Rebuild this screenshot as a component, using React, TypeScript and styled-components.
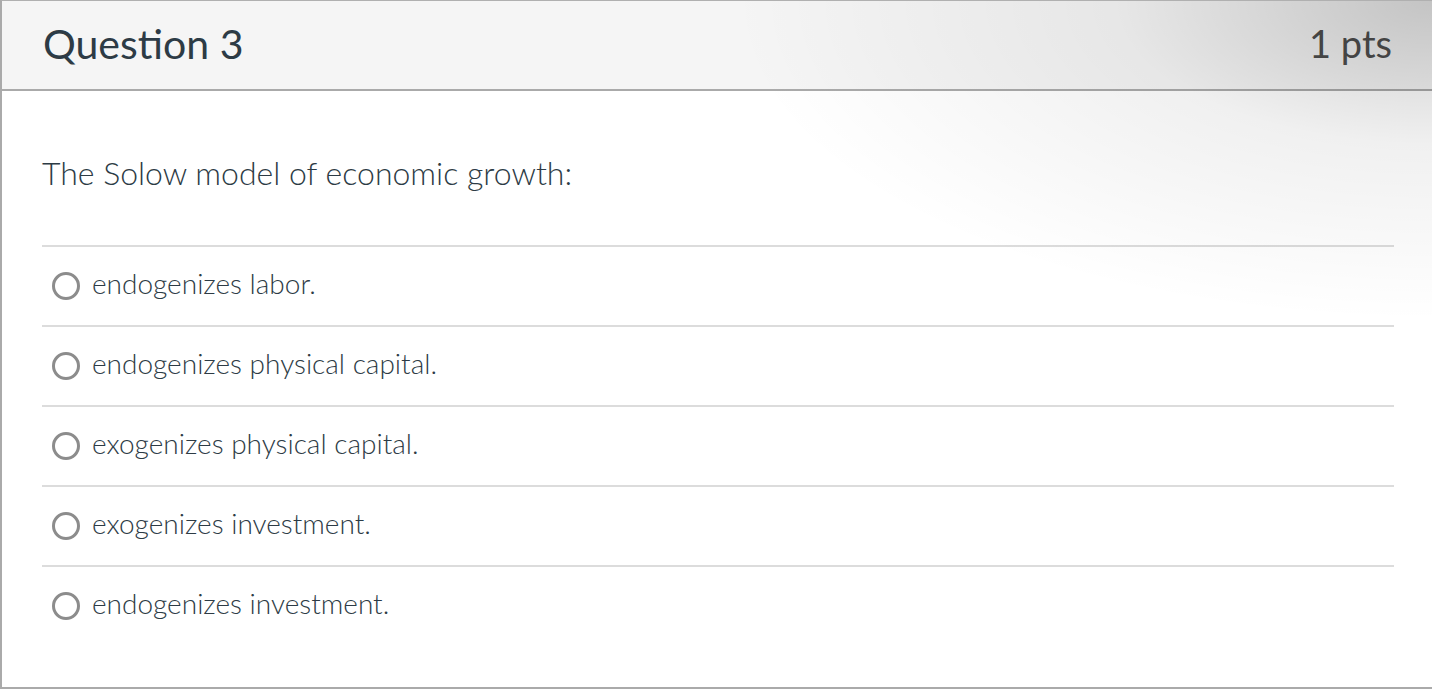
import styled, { createGlobalStyle } from "styled-components";

const GlobalStyle = createGlobalStyle`
  body {
    margin: 0;
    background: #fff;
    font-family: Lato, "Open Sans", sans-serif;
  }
`;

const answers = [
  "endogenizes labor.",
  "endogenizes physical capital.",
  "exogenizes physical capital.",
  "exogenizes investment.",
  "endogenizes investment.",
];

const App = () => {
  return (
    <>
      <GlobalStyle />
      <QuestionBox>
        <Header>
          <Title>Question 3</Title>
          <Points>1 pts</Points>
        </Header>
        <Content>
          <QuestionText>The Solow model of economic growth:</QuestionText>
          <AnswerList>
            {answers.map((a) => (
              <Answer key={a}>
                <Radio />
                <AnswerLabel>{a}</AnswerLabel>
              </Answer>
            ))}
          </AnswerList>
        </Content>
        <Shade />
      </QuestionBox>
    </>
  );
};

export default App;

const QuestionBox = styled.div`
  position: relative;
  width: 1432px;
  height: 689px;
  box-sizing: border-box;
  border-top: 1px solid #b0b0b0;
  border-left: 2px solid #aaaaaa;
  border-bottom: 2px solid #aaaaaa;
  overflow: hidden;
`;

const Header = styled.div`
  display: flex;
  justify-content: space-between;
  align-items: center;
  height: 88px;
  padding: 0 40px 0 41px;
  background: #f5f5f5;
  border-bottom: 2px solid #aaaaaa;
`;

const Title = styled.h2`
  margin: 0;
  font-size: 41px;
  font-weight: 400;
  color: #2d3b45;
  padding-bottom: 4px;
`;

const Points = styled.div`
  font-size: 38px;
  color: #4f4f4f;
  padding-bottom: 4px;
`;

const Content = styled.div`
  padding: 0 38px 0 40px;
`;

const QuestionText = styled.p`
  margin: 0;
  padding-top: 65px;
  height: 89px;
  font-size: 32px;
  font-weight: 300;
  color: #2d3b45;
  line-height: 34px;
`;

const AnswerList = styled.div`
  display: flex;
  flex-direction: column;
`;

const Answer = styled.div`
  display: flex;
  align-items: center;
  gap: 12px;
  height: 78px;
  border-top: 2px solid #dcdcdc;
  padding-left: 10px;
`;

const Radio = styled.span`
  width: 22px;
  height: 22px;
  border: 3px solid #8c8c8c;
  border-radius: 50%;
  background: #fff;
  flex-shrink: 0;
`;

const AnswerLabel = styled.span`
  font-size: 28px;
  font-weight: 300;
  color: #2d3b45;
  padding-bottom: 6px;
`;

const Shade = styled.div`
  position: absolute;
  inset: 0;
  pointer-events: none;
  background: radial-gradient(
    ellipse 700px 320px at 100% 0%,
    rgba(0, 0, 0, 0.2) 0%,
    rgba(0, 0, 0, 0.06) 45%,
    rgba(0, 0, 0, 0) 100%
  );
`;
